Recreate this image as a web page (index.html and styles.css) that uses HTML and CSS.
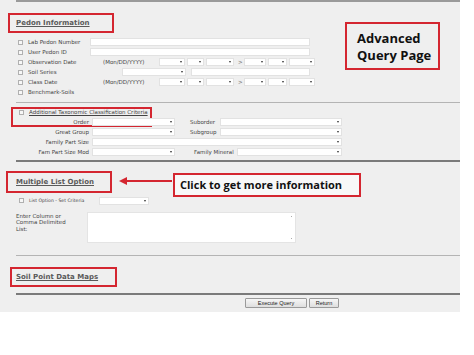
FILE: index.html
```html
<!DOCTYPE html>
<html lang="en">
<head>
    <meta charset="UTF-8">
    <meta name="viewport" content="width=device-width, initial-scale=1.0">
    <title>Advanced Query</title>
    <link rel="stylesheet" href="styles.css">
</head>
<body>
    <div class="panel">
        <div class="rule light top"></div>

        <!-- Pedon information -->
        <div class="section">
            <div class="head-box pedon"><a class="head">Pedon Information</a></div>
            <div class="rows">
                <div class="row">
                    <span class="cb"></span><span class="lbl">Lab Pedon Number</span>
                    <span class="inp w220"></span>
                </div>
                <div class="row">
                    <span class="cb"></span><span class="lbl">User Pedon ID</span>
                    <span class="inp w220"></span>
                </div>
                <div class="row">
                    <span class="cb"></span><span class="lbl">Observation Date</span>
                    <span class="fmt">(Mon/DD/YYYY)</span>
                    <span class="sel w26"></span><span class="sel w17"></span><span class="sel w28"></span>
                    <span class="gt">&gt;</span>
                    <span class="sel w22"></span><span class="sel w19"></span><span class="sel w26"></span>
                </div>
                <div class="row">
                    <span class="cb"></span><span class="lbl">Soil Series</span>
                    <span class="sel w64 series"></span><span class="inp w119"></span>
                </div>
                <div class="row">
                    <span class="cb"></span><span class="lbl">Class Date</span>
                    <span class="fmt">(Mon/DD/YYYY)</span>
                    <span class="sel w26"></span><span class="sel w17"></span><span class="sel w28"></span>
                    <span class="gt">&gt;</span>
                    <span class="sel w22"></span><span class="sel w19"></span><span class="sel w26"></span>
                </div>
                <div class="row">
                    <span class="cb"></span><span class="lbl">Benchmark-Soils</span>
                </div>
            </div>
        </div>
        <div class="rule light r1"></div>

        <!-- taxonomic criteria -->
        <div class="section taxo">
            <div class="mark-box taxo-box"></div>
            <div class="row check-row">
                <span class="cb"></span><a class="link">Additional Taxonomic Classification Criteria</a>
            </div>
            <div class="row">
                <span class="tl">Order</span><span class="sel w83"></span>
                <span class="tl2">Suborder</span><span class="sel w122"></span>
            </div>
            <div class="row">
                <span class="tl">Great Group</span><span class="sel w83"></span>
                <span class="tl2">Subgroup</span><span class="sel w122"></span>
            </div>
            <div class="row">
                <span class="tl">Family Part Size</span><span class="sel w250"></span>
            </div>
            <div class="row">
                <span class="tl">Fam Part Size Mod</span><span class="sel w83"></span>
                <span class="tl3">Family Mineral</span><span class="sel w105"></span>
            </div>
        </div>
        <div class="rule dark r2"></div>

        <!-- multiple list -->
        <div class="section">
            <div class="head-line">
                <div class="head-box multi"><a class="head">Multiple List Option</a></div>
                <svg class="arrow" width="55" height="10" viewBox="0 0 55 10">
                    <path d="M1 5 L9 1 L9 4 L54 4 L54 6 L9 6 L9 9 Z" fill="#d42630"/>
                </svg>
                <div class="callout">Click to get more information</div>
            </div>
            <div class="row list-row">
                <span class="cb"></span><span class="lbl2">List Option - Set Criteria</span>
                <span class="sel w50"></span>
            </div>
            <div class="list-area">
                <div class="area-lbl">Enter Column or Comma Delimited List:</div>
                <div class="area">
                    <span class="sc up"></span><span class="sc down"></span>
                </div>
            </div>
        </div>
        <div class="rule light r3"></div>

        <!-- maps -->
        <div class="section">
            <div class="head-box maps"><a class="head">Soil Point Data Maps</a></div>
        </div>
        <div class="rule dark r4"></div>

        <div class="buttons">
            <button class="btn exec">Execute Query</button>
            <button class="btn ret">Return</button>
        </div>

        <div class="title-box">
            <div>Advanced</div>
            <div>Query Page</div>
        </div>
    </div>
</body>
</html>
```

FILE: styles.css
```css
*{
    box-sizing: border-box;
    padding: 0;
    margin: 0;
}

body{
    background: #fff;
    font-family: "DejaVu Sans", Verdana, sans-serif;
    font-size: 5.5px;
    color: #444;
}

.panel{
    position: relative;
    width: 460px;
    height: 312px;
    background: #efefef;
}

.rule{
    margin-left: 16px;
}
.rule.light{
    border-top: 1px solid #b4b4b4;
}
.rule.dark{
    border-top: 2px solid #7a7a7a;
}
.rule.top{
    border-top: 2px solid #9a9a9a;
}
.r1{ margin-top: 5px; }
.r2{ margin-top: 3px; }
.r3{ margin-top: 12px; }
.r4{ margin-top: 6px; }

.section{
    position: relative;
}

/* red boxed headings */
.head-box{
    display: inline-block;
    border: 2px solid #d42630;
}
.head{
    font-size: 7px;
    font-weight: bold;
    color: #5a5a5a;
    text-decoration: underline;
}
.pedon{
    margin: 11px 0 0 8px;
    width: 106px;
    height: 20px;
    padding: 4px 0 0 6px;
}
.multi{
    margin: 9px 0 0 6px;
    width: 106px;
    height: 22px;
    padding: 5px 0 0 8px;
}
.maps{
    margin: 11px 0 0 10px;
    width: 107px;
    height: 20px;
    padding: 4px 0 0 4px;
}

.rows{
    margin-top: 4px;
}
.row{
    display: flex;
    align-items: center;
    height: 10px;
    padding-left: 18px;
    white-space: nowrap;
}

.cb{
    width: 5px;
    height: 5px;
    border: 1px solid #b0b0b0;
    background: #f7f7f7;
    margin-right: 5px;
    flex-shrink: 0;
}
.lbl{
    width: 62px;
}
.fmt{
    margin-left: 13px;
    width: 56px;
}
.gt{
    width: 8px;
    padding-left: 2px;
    color: #777;
}

.inp,
.sel{
    position: relative;
    height: 8px;
    background: #fff;
    border: 1px solid #e2e2e2;
    flex-shrink: 0;
}
.sel{
    margin-right: 2px;
}
.sel::after{
    content: '';
    position: absolute;
    right: 2px;
    top: 2px;
    border-left: 1px solid transparent;
    border-right: 1px solid transparent;
    border-top: 2px solid #333;
}
.series{
    margin-left: 32px;
    margin-right: 5px;
}

.w17{ width: 17px; }
.w19{ width: 19px; }
.w22{ width: 22px; }
.w26{ width: 26px; }
.w28{ width: 28px; }
.w50{ width: 50px; }
.w64{ width: 64px; }
.w83{ width: 83px; }
.w105{ width: 105px; }
.w119{ width: 119px; }
.w122{ width: 122px; }
.w220{ width: 220px; }
.w250{ width: 250px; }

/* taxonomic block */
.taxo{
    padding-top: 4px;
}
.taxo .row{
    padding-left: 0;
}
.taxo .check-row{
    padding-left: 19px;
}
.link{
    color: #444;
    text-decoration: underline;
}
.tl{
    width: 92px;
    text-align: right;
    padding-right: 3px;
}
.tl2{
    margin-left: 13px;
    width: 30px;
}
.tl3{
    margin-left: 17px;
    width: 43px;
}
.mark-box{
    position: absolute;
    left: 11px;
    top: 4px;
    width: 141px;
    height: 20px;
    border: 2px solid #d42630;
}

/* multiple list */
.head-line{
    display: flex;
    align-items: flex-start;
}
.arrow{
    margin: 14px 0 0 6px;
}
.callout{
    margin-top: 11px;
    width: 188px;
    height: 24px;
    border: 2px solid #d42630;
    background: #f8f8f8;
    padding: 2px 0 0 5px;
    font-family: "Open Sans", sans-serif;
    font-size: 11px;
    font-weight: bold;
    color: #111;
}
.list-row{
    height: 7px;
    padding-left: 19px;
}
.lbl2{
    width: 70px;
    font-size: 4.6px;
}
.list-area{
    display: flex;
    margin-top: 8px;
    padding-left: 16px;
}
.area-lbl{
    width: 71px;
    padding-top: 1px;
    line-height: 6.3px;
    padding-right: 20px;
}
.area{
    position: relative;
    width: 209px;
    height: 31px;
    background: #fff;
    border: 1px solid #e4e4e4;
}
.sc{
    position: absolute;
    right: 3px;
    width: 1px;
    height: 1px;
    background: #aaa;
}
.sc.up{ top: 3px; }
.sc.down{ bottom: 3px; }

/* buttons */
.buttons{
    display: flex;
    gap: 2px;
    margin: 3px 0 0 245px;
}
.btn{
    height: 10px;
    border: 1px solid #9a9a9a;
    border-radius: 1px;
    background: linear-gradient(#f6f6f6, #dedede);
    font-family: "Liberation Sans", Arial, sans-serif;
    font-size: 5.5px;
    color: #222;
}
.exec{ width: 62px; }
.ret{ width: 30px; }

/* page title annotation */
.title-box{
    position: absolute;
    left: 345px;
    top: 22px;
    width: 95px;
    height: 48px;
    border: 2px solid #d42630;
    padding: 6px 0 0 10px;
    font-family: "Open Sans", sans-serif;
    font-size: 13px;
    line-height: 17px;
    font-weight: bold;
    color: #111;
}
```
